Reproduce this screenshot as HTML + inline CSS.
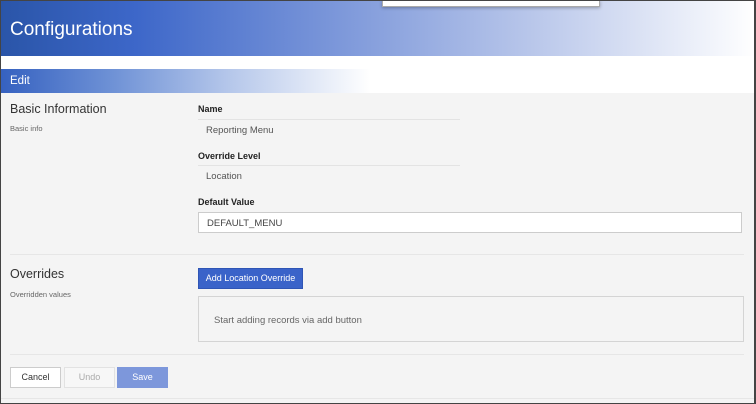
<!DOCTYPE html>
<html><head><style>
*{box-sizing:border-box;margin:0;padding:0}
body{width:756px;height:404px;overflow:hidden;font-family:"Liberation Sans",Arial,sans-serif;background:#f4f4f4;position:relative}
.frame{position:absolute;left:0;top:0;width:756px;height:404px;border:1px solid #444;border-right:2px solid #444;pointer-events:none;z-index:10}
.hdr{position:absolute;left:0;top:0;width:756px;height:56px;background:linear-gradient(90deg,#2a55a8 0%,#3d67c9 18%,#7d98da 45%,#b8c6ea 70%,#fff 100%)}
.hdr h1{position:absolute;left:10px;top:19px;font-weight:normal;font-size:19px;color:#fff}
.pop{position:absolute;left:382px;top:0;width:218px;height:7px;background:#fff;border:1px solid #aaa;border-top:none;box-shadow:0 1px 3px rgba(0,0,0,.3)}
.white{position:absolute;left:0;top:56px;width:756px;height:37px;background:#fff}
.edit{position:absolute;left:0;top:69px;width:756px;height:24px;background:linear-gradient(90deg,#3561c0 0%,#6f92d6 15%,#b4c6ea 30%,#fff 49%,#fff 100%);color:#fff;font-size:11.5px;padding:6px 10px}
.t{position:absolute;font-size:12px}
.h2{font-size:12.5px;color:#333}
.sm{font-size:7.5px;color:#666}
.lbl{font-size:9px;font-weight:bold;color:#222}
.ro{position:absolute;left:198px;width:262px;height:20px;border-top:1px solid #e3e3e3;font-size:9.5px;color:#555;padding:5px 8px}
.inp{position:absolute;left:198px;top:212px;width:544px;height:21px;background:#fff;border:1px solid #ccc;font-size:9.5px;color:#444;padding:5px 8px}
.hr{position:absolute;left:10px;width:734px;height:1px;background:#e6e6e6}
.btn{position:absolute;font-size:9px;text-align:center;line-height:19px;height:21px}
</style></head><body>
<div class="hdr"><h1>Configurations</h1></div>
<div class="pop"></div>
<div class="white"></div>
<div class="edit">Edit</div>
<div class="t h2" style="left:10px;top:102px">Basic Information</div>
<div class="t sm" style="left:10px;top:124px">Basic info</div>
<div class="t lbl" style="left:198px;top:104px">Name</div>
<div class="ro" style="top:119px">Reporting Menu</div>
<div class="t lbl" style="left:198px;top:151px">Override Level</div>
<div class="ro" style="top:165px">Location</div>
<div class="t lbl" style="left:198px;top:197px">Default Value</div>
<div class="inp">DEFAULT_MENU</div>
<div class="hr" style="top:254px"></div>
<div class="t h2" style="left:10px;top:267px">Overrides</div>
<div class="t sm" style="left:10px;top:290px">Overridden values</div>
<div class="btn" style="left:198px;top:268px;width:105px;background:#3a63c9;color:#fff;border:1px solid #2f55b5">Add Location Override</div>
<div style="position:absolute;left:198px;top:296px;width:546px;height:46px;border:1px solid #d4d4d4;background:#f4f4f4;font-size:9.5px;color:#666;padding:18px 15px">Start adding records via add button</div>
<div class="hr" style="top:354px"></div>
<div class="btn" style="left:10px;top:367px;width:51px;background:#fff;border:1px solid #ccc;color:#333">Cancel</div>
<div class="btn" style="left:64px;top:367px;width:51px;background:#f7f7f7;border:1px solid #e2e2e2;color:#aaa">Undo</div>
<div class="btn" style="left:117px;top:367px;width:51px;background:#7d97db;border:1px solid #7d97db;color:#fff">Save</div>
<div class="hr" style="top:398px;left:0;width:756px"></div>
<div class="frame"></div>
</body></html>
